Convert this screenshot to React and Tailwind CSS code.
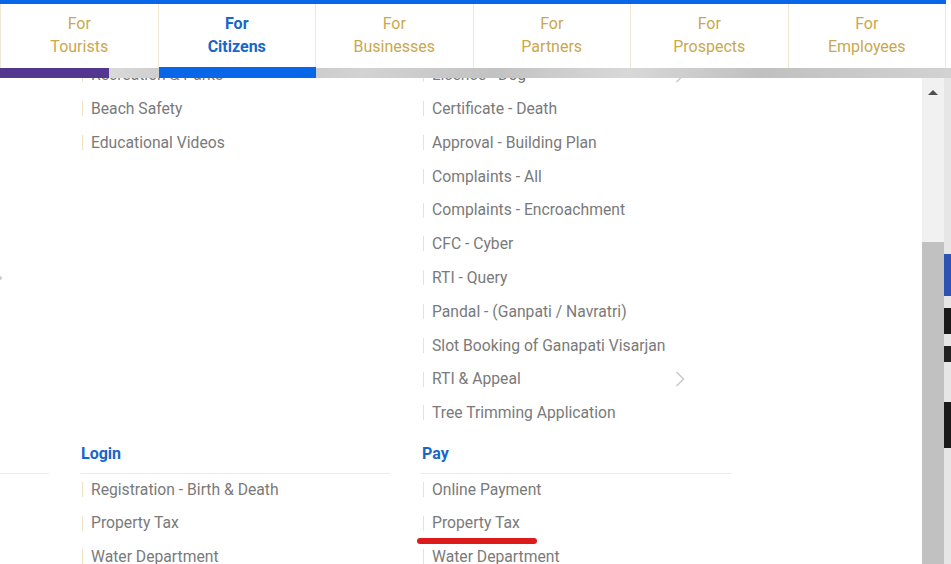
import React from 'react';

const tabs = [
  { label: 'Tourists' },
  { label: 'Citizens', active: true },
  { label: 'Businesses' },
  { label: 'Partners' },
  { label: 'Prospects' },
  { label: 'Employees' },
];

// first column sits mostly off the left edge; only its rule and one chevron show
const columns = [
  {
    items: [{}, {}, {}, {}, {}, {}, { arrow: true }, {}],
    section: '',
    links: [],
  },
  {
    items: [
      { label: 'Recreation & Parks' },
      { label: 'Beach Safety' },
      { label: 'Educational Videos' },
    ],
    section: 'Login',
    links: ['Registration - Birth & Death', 'Property Tax', 'Water Department', 'Licence'],
  },
  {
    items: [
      { label: 'Licence - Dog', arrow: true },
      { label: 'Certificate - Death' },
      { label: 'Approval - Building Plan' },
      { label: 'Complaints - All' },
      { label: 'Complaints - Encroachment' },
      { label: 'CFC - Cyber' },
      { label: 'RTI - Query' },
      { label: 'Pandal - (Ganpati / Navratri)' },
      { label: 'Slot Booking of Ganapati Visarjan' },
      { label: 'RTI & Appeal', arrow: true },
      { label: 'Tree Trimming Application' },
    ],
    section: 'Pay',
    links: ['Online Payment', 'Property Tax', 'Water Department', 'Licence'],
  },
];

function Chevron() {
  return (
    <svg width="10" height="16" viewBox="0 0 10 16" className="ml-auto mr-[46px]">
      <polyline points="1.5,1 8.5,8 1.5,15" fill="none" stroke="#c9c9c9" strokeWidth="1.5" />
    </svg>
  );
}

function Item({ label, arrow, tight }) {
  return (
    <li className={`flex items-center ${tight ? 'h-[33.5px]' : 'h-[33.8px]'}`}>
      <span className="ml-[2px] h-[15px] w-px bg-[#ece3c4]" />
      {label && <span className="ml-[8px] whitespace-nowrap text-[15.7px] text-[#7a7a7a]">{label}</span>}
      {arrow && <Chevron />}
    </li>
  );
}

export default function App() {
  return (
    <div className="relative h-[564px] w-[951px] overflow-hidden bg-white font-['Roboto',sans-serif]">
      {/* Audience tabs */}
      <div className="flex">
        <div className="w-[946px]">
          <div className="h-[4px] bg-[#0866e8]" />
          <div className="grid h-[64px] grid-cols-6 border-l border-[#efe8d2]">
            {tabs.map((t) => (
              <div
                key={t.label}
                className={`border-r border-[#efe8d2] pt-[8px] text-center text-[16px] leading-[23px] ${
                  t.active ? 'font-bold text-[#1766c9]' : 'text-[#c9a84e]'
                }`}
              >
                <div>For</div>
                <div>{t.label}</div>
              </div>
            ))}
          </div>
        </div>
      </div>

      {/* Banner strip */}
      <div className="flex h-[10px] bg-[linear-gradient(95deg,#c6c6c6_0%,#d9d9d9_12%,#bfbfbf_24%,#d3d3d3_38%,#c2c2c2_52%,#d8d8d8_66%,#c0c0c0_80%,#d2d2d2_100%)]">
        <div className="w-[109px] bg-[#53368f]" />
        <div className="w-[50px]" />
        <div className="-mt-px w-[157px] bg-[#0866e8]" />
      </div>

      {/* Menu body */}
      <div className="flex h-[486px]">
        <div className="w-[922px] overflow-hidden">
          <div className="-ml-[261px] -mt-[20px] grid grid-cols-[310px_310px_310px] gap-x-[31px]">
            {columns.map((c, i) => (
              <ul key={'l' + i}>
                {c.items.map((it, j) => (
                  <Item key={j} {...it} />
                ))}
              </ul>
            ))}
            {columns.map((c, i) => (
              <div key={'s' + i}>
                <div className="h-[44px] border-b border-[#efeadb] pl-px pt-[12px] pb-[7px] text-[16px] font-bold leading-[24px] text-[#1766c9]">
                  {c.section}
                </div>
                <ul className="-mt-px">
                  {c.links.map((l) => (
                    <Item key={l} label={l} tight />
                  ))}
                </ul>
              </div>
            ))}
          </div>
        </div>

        {/* Scrollbar */}
        <div className="flex w-[22px] flex-col bg-[#f1f1f1]">
          <div className="flex h-[28px] items-center justify-center">
            <div className="h-0 w-0 border-x-[5px] border-b-[5px] border-x-transparent border-b-[#505050]" />
          </div>
          <div className="mt-[136px] flex-1 bg-[#c1c1c1]" />
        </div>

        {/* Page background peeking out */}
        <div className="flex w-[7px] flex-col bg-[#e6e6e6]">
          <div className="h-[176px]" />
          <div className="h-[42px] bg-[#2c52b4]" />
          <div className="h-[12px]" />
          <div className="h-[26px] bg-[#1a1a1a]" />
          <div className="h-[12px]" />
          <div className="h-[16px] bg-[#222]" />
          <div className="h-[40px]" />
          <div className="h-[46px] bg-[#1a1a1a]" />
        </div>
      </div>

      {/* Annotation underline */}
      <div className="absolute left-[417px] top-[538px] h-[6px] w-[120px] rounded-full bg-[#dd1b1b]" />
    </div>
  );
}
